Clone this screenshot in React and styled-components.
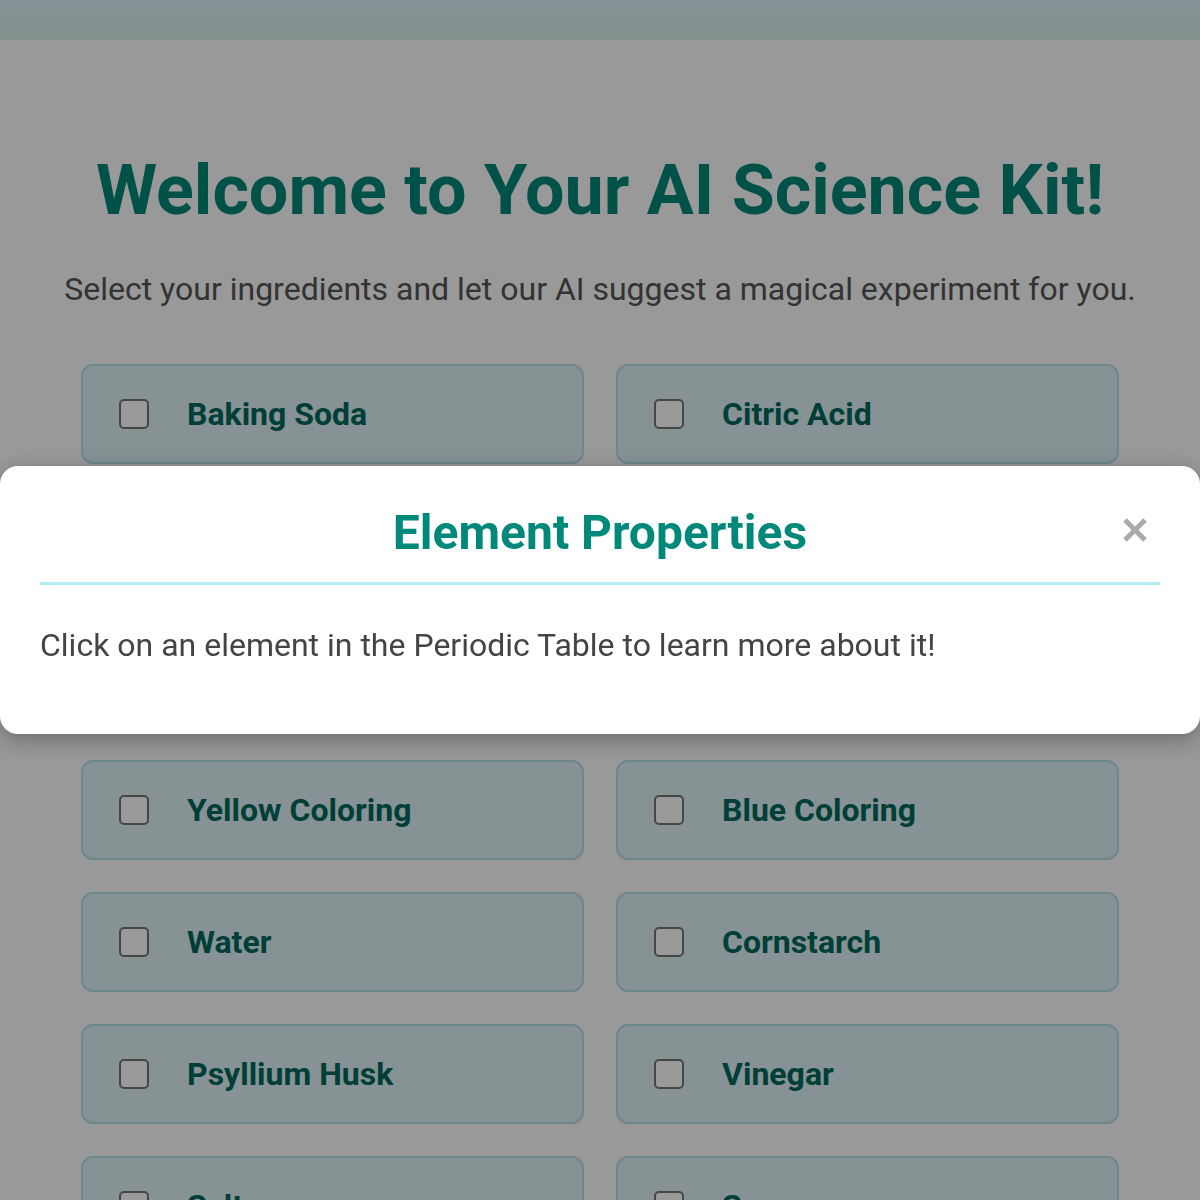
import React from "react";
import styled, { createGlobalStyle } from "styled-components";

const GlobalStyle = createGlobalStyle`
  body {
    margin: 0;
    background: #ffffff;
    font-family: Roboto, "Liberation Sans", sans-serif;
  }
`;

const TopBar = styled.div`
  height: 40px;
  background: linear-gradient(180deg, #e0f4fa 0%, #dcf0ea 100%);
`;

const Main = styled.main`
  max-width: 1038px;
  margin: 0 auto;
  padding: 108px 0 0;
`;

const Heading = styled.h1`
  margin: 0;
  text-align: center;
  font-size: 70px;
  font-weight: 700;
  line-height: 84px;
  color: #00897b;
`;

const Subtitle = styled.p`
  margin: 34px -80px 0;
  text-align: center;
  font-size: 32px;
  line-height: 46px;
  color: #555555;
`;

const Grid = styled.div`
  display: grid;
  grid-template-columns: 1fr 1fr;
  gap: 32px;
  margin-top: 52px;
`;

const Card = styled.label`
  display: flex;
  align-items: center;
  gap: 38px;
  height: 100px;
  box-sizing: border-box;
  padding: 0 36px;
  background: #e0f4f7;
  border: 2px solid #b2e3ea;
  border-radius: 12px;
`;

const Box = styled.span`
  width: 30px;
  height: 30px;
  box-sizing: border-box;
  border: 2px solid #767676;
  border-radius: 5px;
  background: #ffffff;
  flex-shrink: 0;
`;

const Label = styled.span`
  font-size: 32px;
  font-weight: 700;
  color: #00695c;
`;

const Overlay = styled.div`
  position: fixed;
  inset: 0;
  background: rgba(0, 0, 0, 0.4);
  display: flex;
  align-items: center;
  justify-content: center;
`;

const Modal = styled.div`
  position: relative;
  width: 100%;
  box-sizing: border-box;
  padding: 36px 40px 67px;
  background: #ffffff;
  border-radius: 18px;
  box-shadow: 0 6px 24px rgba(0, 0, 0, 0.3);
`;

const ModalTitle = styled.h2`
  margin: 0;
  padding-bottom: 18px;
  border-bottom: 3px solid #b2ebf2;
  text-align: center;
  font-size: 48px;
  font-weight: 700;
  line-height: 62px;
  color: #00897b;
`;

const Close = styled.button`
  position: absolute;
  top: 51px;
  right: 52px;
  width: 26px;
  height: 26px;
  padding: 0;
  border: none;
  background: none;
  display: flex;
`;

const ModalText = styled.p`
  margin: 38px 0 0;
  font-size: 32px;
  line-height: 44px;
  color: #444444;
`;

const ingredients = [
  "Baking Soda",
  "Citric Acid",
  "Red Coloring",
  "Green Coloring",
  "Dish Soap",
  "Glue",
  "Yellow Coloring",
  "Blue Coloring",
  "Water",
  "Cornstarch",
  "Psyllium Husk",
  "Vinegar",
  "Salt",
  "Sugar",
];

export default function App() {
  return (
    <>
      <GlobalStyle />
      <TopBar />
      <Main>
        <Heading>Welcome to Your AI Science Kit!</Heading>
        <Subtitle>
          Select your ingredients and let our AI suggest a magical experiment for you.
        </Subtitle>
        <Grid>
          {ingredients.map((name) => (
            <Card key={name}>
              <Box />
              <Label>{name}</Label>
            </Card>
          ))}
        </Grid>
      </Main>
      <Overlay>
        <Modal>
          <Close aria-label="Close">
            <svg width="26" height="26" viewBox="0 0 26 26">
              <path d="M3 3 L23 23 M23 3 L3 23" stroke="#aaaaaa" strokeWidth="5" />
            </svg>
          </Close>
          <ModalTitle>Element Properties</ModalTitle>
          <ModalText>Click on an element in the Periodic Table to learn more about it!</ModalText>
        </Modal>
      </Overlay>
    </>
  );
}
